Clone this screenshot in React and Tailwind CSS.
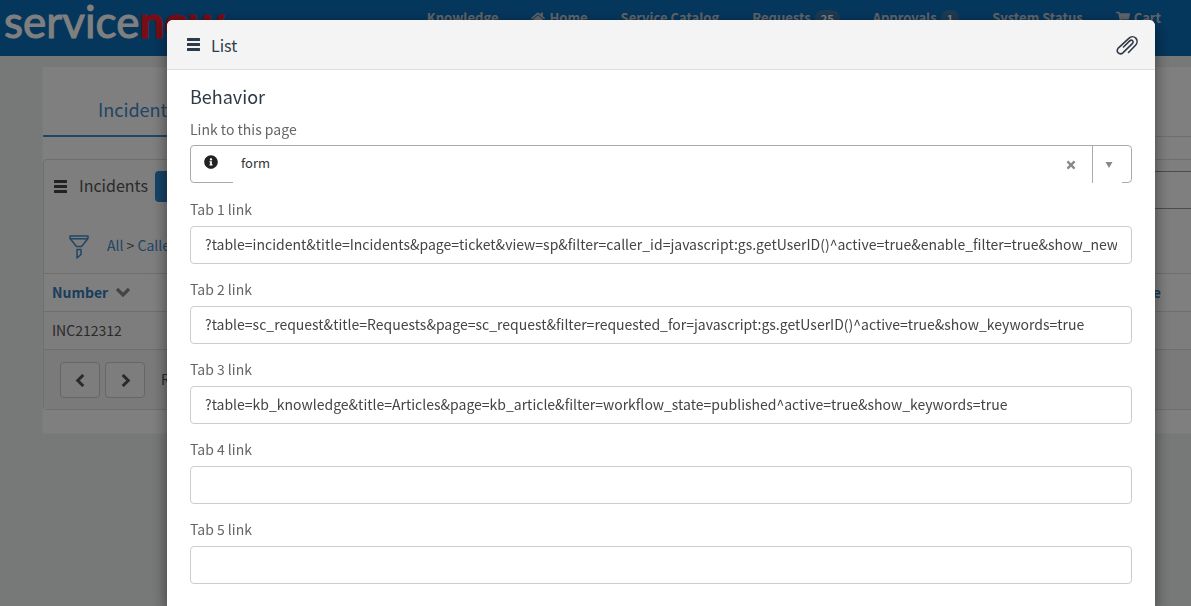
import React, { useState } from 'react';
import { FaHome, FaShoppingCart, FaInfoCircle } from 'react-icons/fa';

const initialLinks = [
  '?table=incident&title=Incidents&page=ticket&view=sp&filter=caller_id=javascript:gs.getUserID()^active=true&enable_filter=true&show_new=true',
  '?table=sc_request&title=Requests&page=sc_request&filter=requested_for=javascript:gs.getUserID()^active=true&show_keywords=true',
  '?table=kb_knowledge&title=Articles&page=kb_article&filter=workflow_state=published^active=true&show_keywords=true',
  '',
  '',
];

function Bars({ className }) {
  return (
    <svg className={className} width="14" height="14" viewBox="0 0 14 14" fill="currentColor" aria-hidden="true">
      <rect x="0" y="0" width="13" height="3" rx="0.5" />
      <rect x="0" y="5" width="13" height="3" rx="0.5" />
      <rect x="0" y="10" width="13" height="3" rx="0.5" />
    </svg>
  );
}

function Funnel() {
  return (
    <svg width="20" height="24" viewBox="0 0 20 24" fill="none" stroke="currentColor" strokeWidth="1.5" strokeLinejoin="round" aria-hidden="true">
      <path d="M1 1h18v2.5L12.5 11.5h-5L1 3.5z" />
      <path d="M1 3.8h18" />
      <path d="M8 14.5h4v5L8 23z" />
    </svg>
  );
}

function Paperclip() {
  return (
    <svg width="22" height="20" viewBox="0 0 22 20" fill="none" stroke="currentColor" strokeWidth="1.6" strokeLinecap="round" strokeLinejoin="round" aria-hidden="true">
      <path d="M12.5 17.5l7-7.2c2-2.2 2-5.3.3-7.2-1.9-1.9-5-1.7-7 .2L2.5 12.8c-1.5 1.5-1.7 3.7-.4 5 1.3 1.3 3.5 1.2 5-.2L16.3 8.6c.9-.9 1-2.2.3-2.9-.8-.8-2-.6-2.9.2L7.5 12" />
    </svg>
  );
}

// Heavy chevron / cross, drawn as one stroke on a 14px grid
function Stroke({ d, size = 14, className }) {
  return (
    <svg className={className} width={size} height={size} viewBox="0 0 14 14" fill="none" stroke="currentColor" strokeWidth="3.2" aria-hidden="true">
      <path d={d} />
    </svg>
  );
}

function Badge({ children }) {
  return <span className="ml-1 rounded-full bg-[#3d74a6] px-1.5 text-[11px] leading-4 text-white">{children}</span>;
}

function NavBar() {
  return (
    <header className="flex h-14 items-start justify-between bg-[#0b6db9] pr-[30px] pl-1">
      <a href="#home" className="font-[Lato,sans-serif] text-[44px] leading-[42px] font-normal text-white [-webkit-text-stroke:1px_currentColor]">
        service<span className="font-bold text-[#f01a2b]">now</span>
      </a>
      <nav className="flex gap-[33px] pt-2 text-[13px] leading-5 font-bold whitespace-nowrap text-[#c4cbd2]">
        <a href="#knowledge">Knowledge</a>
        <a href="#home" className="flex items-center gap-1"><FaHome size={14} />Home</a>
        <a href="#catalog">Service Catalog</a>
        <a href="#requests" className="flex items-center">Requests<Badge>25</Badge></a>
        <a href="#approvals" className="flex items-center">Approvals<Badge>1</Badge></a>
        <a href="#status">System Status</a>
        <a href="#cart" className="flex items-center gap-1"><FaShoppingCart size={14} />Cart</a>
      </nav>
    </header>
  );
}

function IncidentList() {
  return (
    <main className="mt-[11px] ml-[42px] border-b border-l border-[#f7f7f7] bg-white pb-[23px]">
      <div className="flex border-b border-[#ddd]">
        <a href="#incidents" className="-mb-px border-b-2 border-[#428bca] px-[55px] pt-7 pb-3 text-[18px] leading-[28px] text-[#428bca]">
          Incidents
        </a>
      </div>

      <section className="mt-[22px] rounded-l border-y border-l border-[#ddd] bg-[#fcfcfc]">
        <div className="flex h-[52px] items-start pt-[11px] pl-[10px]">
          <Bars className="mt-[9px] text-[#444]" />
          <h2 className="ml-[11px] text-[16px] leading-[28px] text-[#555]">Incidents</h2>
          <button type="button" className="ml-[7px] h-[31px] rounded bg-[#2f86cc] px-3 text-[14px] text-white">New</button>
          <input type="search" aria-label="Keyword search" className="ml-auto h-[38px] w-[300px] border-y border-[#999] bg-white px-3" />
        </div>
        <div className="flex h-[61px] items-center pt-2 pl-[25px] text-[14px] leading-5">
          <button type="button" aria-label="Filter" className="text-[#428bca]"><Funnel /></button>
          <p className="ml-[18px] pb-1 text-[#555]">
            <a href="#all" className="text-[#428bca]">All</a> &gt; <a href="#caller" className="text-[#428bca]">Caller</a>
          </p>
        </div>
        <table className="w-full text-left text-[14px] leading-5">
          <thead>
            <tr className="h-[38px] border-t border-[#ddd] bg-white text-[#337ab7]">
              <th className="pb-0.5 pl-2 font-bold">
                <span className="flex items-center gap-2">Number <Stroke d="M1 4l6 6 6-6" className="text-[#888]" /></span>
              </th>
              <th className="pr-[30px] pb-0.5 text-right font-bold">State</th>
            </tr>
          </thead>
          <tbody>
            <tr className="h-[38px] border-y border-[#ddd] bg-[#fbfbfb] text-[#555]">
              <td className="pb-0.5 pl-2">INC212312</td>
              <td></td>
            </tr>
          </tbody>
        </table>
        <div className="flex items-center gap-[5px] bg-[#f5f5f5] px-4 pt-3 pb-[11px] text-[14px] text-[#555]">
          <button type="button" aria-label="Previous page" className="flex h-9 w-10 items-center justify-center rounded border border-[#ccc] bg-[#fbfbfb]"><Stroke d="M10 1L4 7l6 6" size={13} /></button>
          <button type="button" aria-label="Next page" className="flex h-9 w-10 items-center justify-center rounded border border-[#ccc] bg-[#fbfbfb]"><Stroke d="M4 1l6 6-6 6" size={13} /></button>
          <span className="ml-[11px] pb-0.5 leading-5">Rows</span>
        </div>
      </section>
    </main>
  );
}

function LinkField({ index, value, onChange }) {
  const id = `tab-link-${index}`;
  return (
    <div className="mb-4">
      <label htmlFor={id} className="mb-[7px] block text-[14px] leading-[19px] text-[#666]">Tab {index} link</label>
      <input
        id={id}
        type="text"
        value={value}
        onChange={(e) => onChange(e.target.value)}
        className="block h-[38px] w-full rounded border border-[#ccc] bg-white px-[14px] pb-0.5 text-[14px] text-[#444]"
      />
    </div>
  );
}

function PageSelect() {
  const [page, setPage] = useState('form');
  return (
    <div className="mb-[17px]">
      <label htmlFor="page-link" className="mb-[6px] block text-[14px] leading-[19px] text-[#666]">Link to this page</label>
      <div className="flex h-[38px] rounded border border-[#aaa]">
        <span className="flex w-[42px] shrink-0 items-center pb-1 pl-[13px] text-[#222]"><FaInfoCircle size={14} /></span>
        {/* covers the bottom border of the group */}
        <div className="mr-[9px] -mb-px flex flex-1 bg-white">
          <select
            id="page-link"
            value={page}
            onChange={(e) => setPage(e.target.value)}
            className="flex-1 appearance-none bg-white pb-1 pl-2 text-[13px] text-[#333]"
          >
            <option value="">-- None --</option>
            <option value="form">form</option>
          </select>
          <button type="button" aria-label="Clear" onClick={() => setPage('')} className="mr-4 text-[#888]"><Stroke d="M2 2l10 10M12 2L2 12" size={10} /></button>
          <span className="flex w-[30px] items-center border-l border-[#aaa] pl-3 text-[#888]">
            <svg width="8" height="6" viewBox="0 0 8 6" fill="currentColor" aria-hidden="true"><path d="M0.5 0h7L4 6z" /></svg>
          </span>
        </div>
      </div>
    </div>
  );
}

function App() {
  const [links, setLinks] = useState(initialLinks);

  const updateLink = (i, value) => {
    setLinks(links.map((link, n) => (n === i ? value : link)));
  };

  return (
    <div className="h-screen overflow-hidden bg-[#eff2f2] font-['Noto_Sans_CJK_SC','Open_Sans',sans-serif]">
      <NavBar />
      <IncidentList />

      {/* Instance options dialog */}
      <div className="fixed inset-0 overflow-hidden bg-black/50 pt-5 pr-9 pl-[167px]">
        <div role="dialog" aria-label="List" className="min-h-full rounded-t-md bg-white shadow-[0_5px_15px_rgba(0,0,0,0.5)]">
          <div className="flex h-[50px] items-center justify-between rounded-t-md border-b border-[#ddd] bg-[#f4f4f4] pr-[17px] pl-5 text-[#2e3a47]">
            <h1 className="flex items-center gap-[10px] text-[16px] leading-[22px]"><Bars />List</h1>
            <button type="button" aria-label="Attachments"><Paperclip /></button>
          </div>
          <form className="px-[23px] pt-[14px]">
            <h2 className="mb-3 text-[18px] leading-6 text-[#2e3a47]">Behavior</h2>
            <PageSelect />
            {links.map((link, i) => (
              <LinkField key={i} index={i + 1} value={link} onChange={(value) => updateLink(i, value)} />
            ))}
          </form>
        </div>
      </div>
    </div>
  );
}

export default App;
